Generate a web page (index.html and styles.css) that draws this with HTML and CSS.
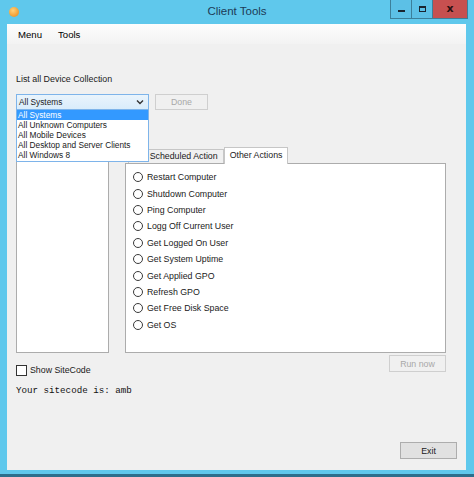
FILE: index.html
```html
<!DOCTYPE html>
<html lang="en">
<head>
    <meta charset="UTF-8">
    <title>Client Tools</title>
    <link rel="stylesheet" href="styles.css">
</head>
<body>
    <div class="window">
        <div class="titlebar">
            <span class="app-icon"></span>
            <span class="title">Client Tools</span>
            <div class="caption-buttons">
                <span class="cap-btn cap-min"><span class="min-glyph"></span></span>
                <span class="cap-btn cap-max"><span class="max-glyph"></span></span>
                <span class="cap-btn cap-close">x</span>
            </div>
        </div>
        <div class="client">
            <div class="menubar">
                <span class="menu-item">Menu</span>
                <span class="menu-item">Tools</span>
            </div>
            <div class="content">
                <div class="caption">List all Device Collection</div>
                <div class="combo-row">
                    <div class="combo">
                        <span class="combo-value">All Systems</span>
                        <svg class="combo-arrow" width="8" height="6" viewBox="0 0 8 6"><path d="M1 1.5 L4 4.5 L7 1.5" fill="none" stroke="#333" stroke-width="1.4"/></svg>
                        <ul class="dropdown">
                            <li class="selected">All Systems</li>
                            <li>All Unknown Computers</li>
                            <li>All Mobile Devices</li>
                            <li>All Desktop and Server Clients</li>
                            <li>All Windows 8</li>
                        </ul>
                    </div>
                    <button class="btn disabled" disabled>Done</button>
                </div>
                <div class="main-grid">
                    <div class="listbox"></div>
                    <div class="tabs">
                        <div class="tab-strip">
                            <span class="tab">Set Scheduled Action</span>
                            <span class="tab active">Other Actions</span>
                        </div>
                        <div class="tab-page">
                            <label class="radio"><span class="dot"></span>Restart Computer</label>
                            <label class="radio"><span class="dot"></span>Shutdown Computer</label>
                            <label class="radio"><span class="dot"></span>Ping Computer</label>
                            <label class="radio"><span class="dot"></span>Logg Off Current User</label>
                            <label class="radio"><span class="dot"></span>Get Logged On User</label>
                            <label class="radio"><span class="dot"></span>Get System Uptime</label>
                            <label class="radio"><span class="dot"></span>Get Applied GPO</label>
                            <label class="radio"><span class="dot"></span>Refresh GPO</label>
                            <label class="radio"><span class="dot"></span>Get Free Disk Space</label>
                            <label class="radio"><span class="dot"></span>Get OS</label>
                        </div>
                    </div>
                    <label class="checkbox"><span class="box"></span>Show SiteCode</label>
                    <div class="run-row">
                        <button class="btn disabled run" disabled>Run now</button>
                    </div>
                </div>
                <div class="sitecode">Your sitecode is: amb</div>
                <div class="footer">
                    <button class="btn exit">Exit</button>
                </div>
            </div>
        </div>
        <div class="bottom-frame"></div>
    </div>
</body>
</html>
```

FILE: styles.css
```css
body {
    margin: 0;
    font-family: "Liberation Sans", Arial, sans-serif;
    font-size: 8.8px;
    color: #000;
}
.window {
    width: 474px;
    height: 477px;
    background-color: #5fc8ec;
    display: flex;
    flex-direction: column;
}
.titlebar {
    height: 24px;
    position: relative;
    display: flex;
    align-items: center;
    justify-content: center;
}
.app-icon {
    position: absolute;
    left: 9px;
    top: 7px;
    width: 10px;
    height: 10px;
    border-radius: 50%;
    background: radial-gradient(circle at 40% 35%, #ffd27a, #f2a23a 60%, #e08a20);
}
.title {
    font-size: 11.5px;
    color: #1d3b57;
    margin-top: -2px;
}
.caption-buttons {
    position: absolute;
    right: 6px;
    top: 0;
    display: flex;
}
.cap-btn {
    height: 19px;
    display: flex;
    align-items: center;
    justify-content: center;
    box-sizing: border-box;
    border: 1px solid #3c7f9a;
    border-top: none;
}
.cap-min, .cap-max {
    width: 22px;
    background-color: #5cc0e6;
}
.cap-max {
    width: 21px;
    border-left: none;
}
.cap-close {
    width: 35px;
    background-color: #c75050;
    border-left: none;
    color: #2a1010;
    font-family: "DejaVu Sans", sans-serif;
    font-weight: bold;
    font-size: 11px;
    padding-bottom: 2px;
}
.min-glyph {
    width: 7px;
    height: 2px;
    background-color: #1a2530;
    margin-top: 4px;
}
.max-glyph {
    width: 5px;
    height: 3px;
    border: 1px solid #1a2530;
    border-top-width: 2px;
}
.client {
    margin: 0 8px 0 7px;
    height: 446px;
    background-color: #f0f0f0;
    display: flex;
    flex-direction: column;
}
.menubar {
    height: 20px;
    background: linear-gradient(#fdfdfd, #f3f3f3);
    display: flex;
    align-items: center;
    padding-left: 11px;
    gap: 16px;
    font-size: 9.6px;
}
.content {
    flex: 1;
    padding: 0 9px 11px 9px;
    display: flex;
    flex-direction: column;
    color: #1a1a1a;
}
.caption {
    margin-top: 29px;
    line-height: 12px;
    font-size: 8.9px;
}
.combo-row {
    margin-top: 9px;
    display: flex;
    gap: 6px;
    position: relative;
    z-index: 2;
}
.combo {
    width: 133px;
    height: 16px;
    box-sizing: border-box;
    border: 1px solid #7eb4ea;
    background: linear-gradient(#eaf4fc, #d9ecfb);
    position: relative;
    display: flex;
    align-items: center;
    padding-left: 2px;
    font-size: 8.3px;
}
.combo-value {
    flex: 1;
}
.combo-arrow {
    margin-right: 4px;
}
.dropdown {
    position: absolute;
    left: -1px;
    top: 15px;
    width: 133px;
    box-sizing: border-box;
    margin: 0;
    padding: 0 0 1px 0;
    list-style: none;
    background-color: #fff;
    border: 1px solid #7eb4ea;
    border-top: none;
}
.dropdown li {
    height: 10px;
    line-height: 10px;
    padding-left: 1px;
    white-space: nowrap;
}
.dropdown li.selected {
    background-color: #3399ff;
    color: #fff;
}
.btn {
    height: 17px;
    box-sizing: border-box;
    border: 1px solid #adadad;
    background-color: #e1e1e1;
    font-family: "Liberation Sans", Arial, sans-serif;
    font-size: 8.8px;
    padding: 0;
    color: #1a1a1a;
}
.btn.disabled {
    background-color: #f0f0f0;
    border-color: #cfcfcf;
    color: #a8a8a8;
}
.combo-row .btn {
    width: 53px;
    height: 16px;
}
.main-grid {
    margin-top: 37px;
    display: grid;
    grid-template-columns: 93px 321px;
    column-gap: 16px;
}
.listbox {
    margin-top: 13px;
    height: 193px;
    box-sizing: border-box;
    background-color: #fff;
    border: 1px solid #acacac;
}
.tabs {
    display: flex;
    flex-direction: column;
}
.tab-strip {
    height: 16px;
    display: flex;
    align-items: flex-end;
    padding-left: 3px;
    position: relative;
    z-index: 1;
}
.tab {
    height: 14px;
    box-sizing: border-box;
    border: 1px solid #c6c6c6;
    border-bottom: none;
    background-color: #f0f0f0;
    padding: 0 5px;
    line-height: 13px;
    white-space: nowrap;
}
.tab.active {
    height: 17px;
    background-color: #fff;
    line-height: 15px;
    margin-bottom: -1px;
    padding: 0 5px 0 5px;
}
.tab-page {
    height: 190px;
    box-sizing: border-box;
    background-color: #fff;
    border: 1px solid #acacac;
    padding: 5px 0 0 7px;
    display: flex;
    flex-direction: column;
}
.radio {
    height: 16.4px;
    display: flex;
    align-items: center;
    gap: 4px;
    white-space: nowrap;
}
.dot {
    width: 10px;
    height: 10px;
    box-sizing: border-box;
    border-radius: 50%;
    border: 1px solid #3a3a3a;
    background-color: #fff;
}
.checkbox {
    margin-top: 11px;
    display: flex;
    align-items: center;
    gap: 3px;
    height: 12px;
    white-space: nowrap;
}
.box {
    width: 11px;
    height: 11px;
    box-sizing: border-box;
    border: 1px solid #333;
    background-color: #fff;
}
.run-row {
    margin-top: 2px;
    display: flex;
    justify-content: flex-end;
}
.btn.run {
    width: 57px;
    height: 17px;
}
.sitecode {
    margin-top: 9px;
    font-family: "Liberation Mono", "DejaVu Sans Mono", monospace;
    font-size: 9.2px;
    color: #111;
}
.footer {
    margin-top: auto;
    display: flex;
    justify-content: flex-end;
}
.btn.exit {
    width: 57px;
    height: 17px;
}
.bottom-frame {
    flex: 1;
    border-bottom: 3px solid #2c6f8c;
}
```
